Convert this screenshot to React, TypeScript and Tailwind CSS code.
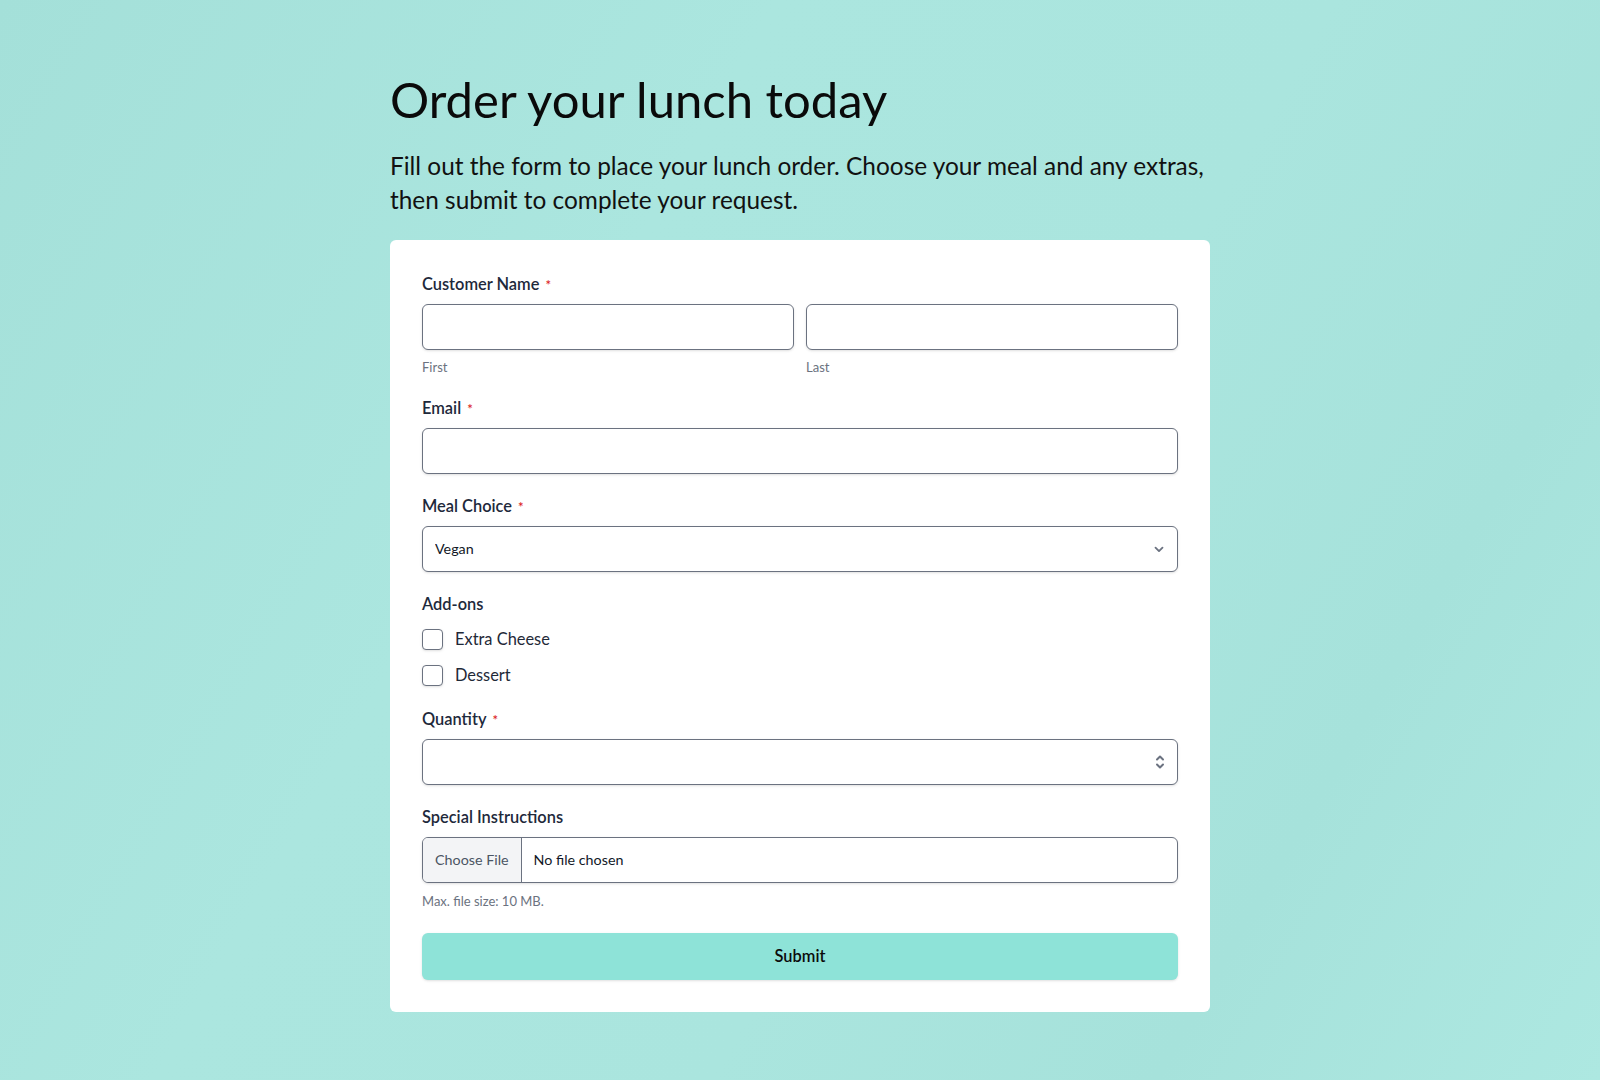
import { useState } from "react";

const Req = () => <span className="ml-1.5 text-[13px] leading-none text-[#dc2626]">*</span>;

const Label = ({ children, required }: { children: React.ReactNode; required?: boolean }) => (
  <label className="block h-6 text-[16.4px] leading-6 font-semibold text-[#1e293b] mb-2">
    {children}
    {required && <Req />}
  </label>
);

const inputCls =
  "w-full h-[46px] border border-[#6b7280] rounded-md px-3 text-[14.3px] text-[#111827] bg-white shadow-sm outline-none";

export default function App() {
  const [meal, setMeal] = useState("Vegan");

  return (
    <div
      className="min-h-screen w-full pt-[70px] pb-16 bg-[linear-gradient(120deg,#a4e0d9_0%,#abe6df_35%,#aae5de_60%,#a6e2db_80%,#ade8e1_100%)] text-[#0b0b0b]"
      style={{ fontFamily: "Lato, 'Open Sans', sans-serif" }}
    >
      <div className="w-[820px] mx-auto">
        {/* Heading */}
        <h1 className="text-[49px] leading-[58px] font-normal text-[#0a0a0a]">Order your lunch today</h1>
        <p className="mt-[21px] text-[24.4px] leading-[34px] text-[#111]">
          Fill out the form to place your lunch order. Choose your meal and any extras, then submit to complete your
          request.
        </p>

        {/* Card */}
        <form className="mt-[23px] bg-white rounded-md p-8 flex flex-col gap-5">
          {/* Customer Name */}
          <div>
            <Label required>Customer Name</Label>
            <div className="grid grid-cols-2 gap-3">
              <div>
                <input type="text" className={inputCls} />
                <div className="mt-2 text-[13px] leading-[18px] text-[#6b7280]">First</div>
              </div>
              <div>
                <input type="text" className={inputCls} />
                <div className="mt-2 text-[13px] leading-[18px] text-[#6b7280]">Last</div>
              </div>
            </div>
          </div>

          {/* Email */}
          <div>
            <Label required>Email</Label>
            <input type="email" className={inputCls} />
          </div>

          {/* Meal Choice */}
          <div>
            <Label required>Meal Choice</Label>
            <div className="relative">
              <select
                value={meal}
                onChange={(e) => setMeal(e.target.value)}
                className={inputCls + " appearance-none pr-10"}
              >
                <option>Vegan</option>
                <option>Vegetarian</option>
                <option>Chicken</option>
                <option>Fish</option>
              </select>
              <svg
                className="pointer-events-none absolute right-[12px] top-1/2 -translate-y-1/2 w-[14px] h-[14px] text-[#6b7280]"
                viewBox="0 0 20 20"
                fill="none"
                stroke="currentColor"
                strokeWidth="2.6"
                strokeLinecap="round"
                strokeLinejoin="round"
              >
                <path d="M5 8l5 5 5-5" />
              </svg>
            </div>
          </div>

          {/* Add-ons */}
          <div>
            <div className="h-6 text-[16.4px] leading-6 font-semibold text-[#1e293b]">Add-ons</div>
            <div className="mt-[11px] flex flex-col gap-3">
              {["Extra Cheese", "Dessert"].map((a) => (
                <label key={a} className="flex items-center gap-3 h-6 text-[16.4px] text-[#1f2937]">
                  <input
                    type="checkbox"
                    className="appearance-none w-[21px] h-[21px] border border-[#6b7280] rounded-[4px] bg-white shadow-sm"
                  />
                  {a}
                </label>
              ))}
            </div>
          </div>

          {/* Quantity */}
          <div>
            <Label required>Quantity</Label>
            <div className="relative">
              <input type="text" inputMode="numeric" className={inputCls + " pr-10"} />
              <svg
                className="pointer-events-none absolute right-[11px] top-1/2 -translate-y-1/2 w-[14px] h-[18px] text-[#6b7280]"
                viewBox="0 0 14 18"
                fill="none"
                stroke="currentColor"
                strokeWidth="2"
                strokeLinecap="round"
                strokeLinejoin="round"
              >
                <path d="M4 6.5l3-3 3 3" />
                <path d="M4 11.5l3 3 3-3" />
              </svg>
            </div>
          </div>

          {/* Special Instructions */}
          <div>
            <Label>Special Instructions</Label>
            <label className="flex h-[46px] border border-[#6b7280] rounded-md overflow-hidden bg-white shadow-sm cursor-pointer">
              <span className="flex items-center px-3 bg-[#f3f4f6] border-r border-[#6b7280] text-[14.3px] text-[#4b5563]">
                Choose File
              </span>
              <span className="flex items-center px-3 text-[14.3px] text-[#111827]">No file chosen</span>
              <input type="file" hidden />
            </label>
            <div className="mt-2 text-[13px] leading-5 text-[#6b7280]">Max. file size: 10 MB.</div>
          </div>

          {/* Submit */}
          <button
            type="button"
            className="mt-0.5 h-[47px] w-full bg-[#8ee3d8] rounded-md text-[16.4px] font-semibold text-[#0b0b0b] shadow-sm"
          >
            Submit
          </button>
        </form>
      </div>
    </div>
  );
}
